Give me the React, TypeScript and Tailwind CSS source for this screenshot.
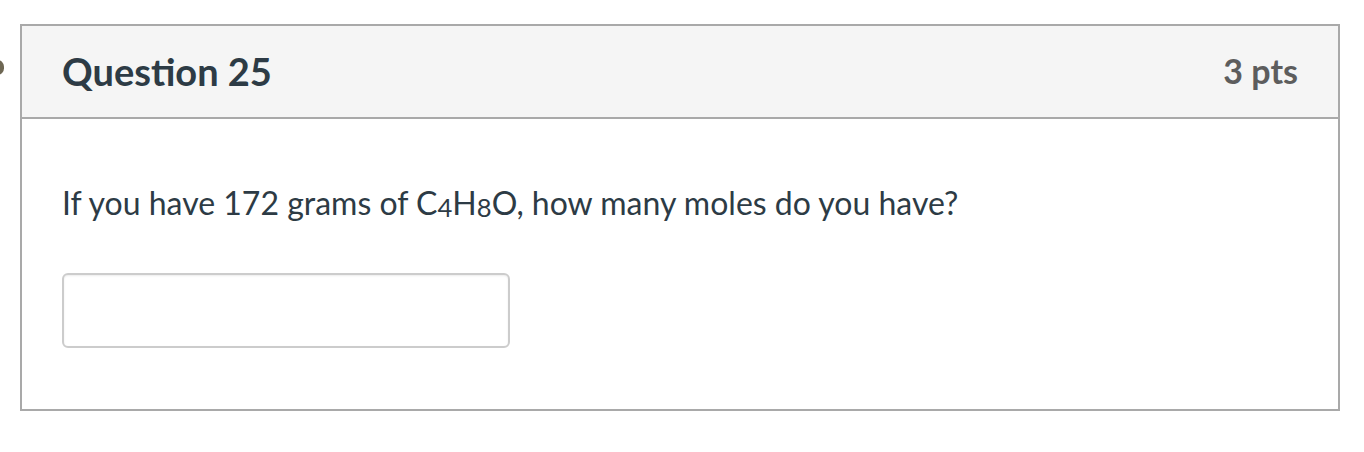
export default function App() {
  return (
    <div className="relative w-[1364px] h-[452px] bg-white overflow-hidden" style={{ fontFamily: 'Lato, "Noto Sans", sans-serif' }}>
      {/* clipped marker at left edge */}
      <div className="absolute left-[-9px] top-[60px] w-[13px] h-[15px] rounded-full bg-[#4a4128] opacity-80" />

      <div className="pt-[24px] pl-[20px] w-[1340px]">
        <div className="border-2 border-[#a9a9a9]">
          {/* Header */}
          <div className="h-[93px] flex items-center justify-between px-10 bg-[#f5f5f5] border-b-2 border-[#a9a9a9]">
            <h2 className="text-[38px] leading-[1.2] font-bold text-[#2d3b45]">Question 25</h2>
            <span className="text-[34px] leading-[1.2] font-bold text-[#5d5d5d]">3 pts</span>
          </div>

          {/* Body */}
          <div className="px-10 pt-[61px] pb-[61px]">
            <p className="text-[32px] leading-[45px] text-[#2d3b45]">
              If you have 172 grams of C<span className="text-[0.8em] align-[-0.08em] leading-none">4</span>H<span className="text-[0.8em] align-[-0.08em] leading-none">8</span>O, how many moles do you have?
            </p>
            <div className="mt-[48px]">
              <input
                type="text"
                className="block w-[448px] h-[75px] border-2 border-[#cccccc] rounded-[6px] bg-white shadow-[inset_0_1px_2px_rgba(0,0,0,0.08)] outline-none"
              />
            </div>
          </div>
        </div>
      </div>
    </div>
  );
}
